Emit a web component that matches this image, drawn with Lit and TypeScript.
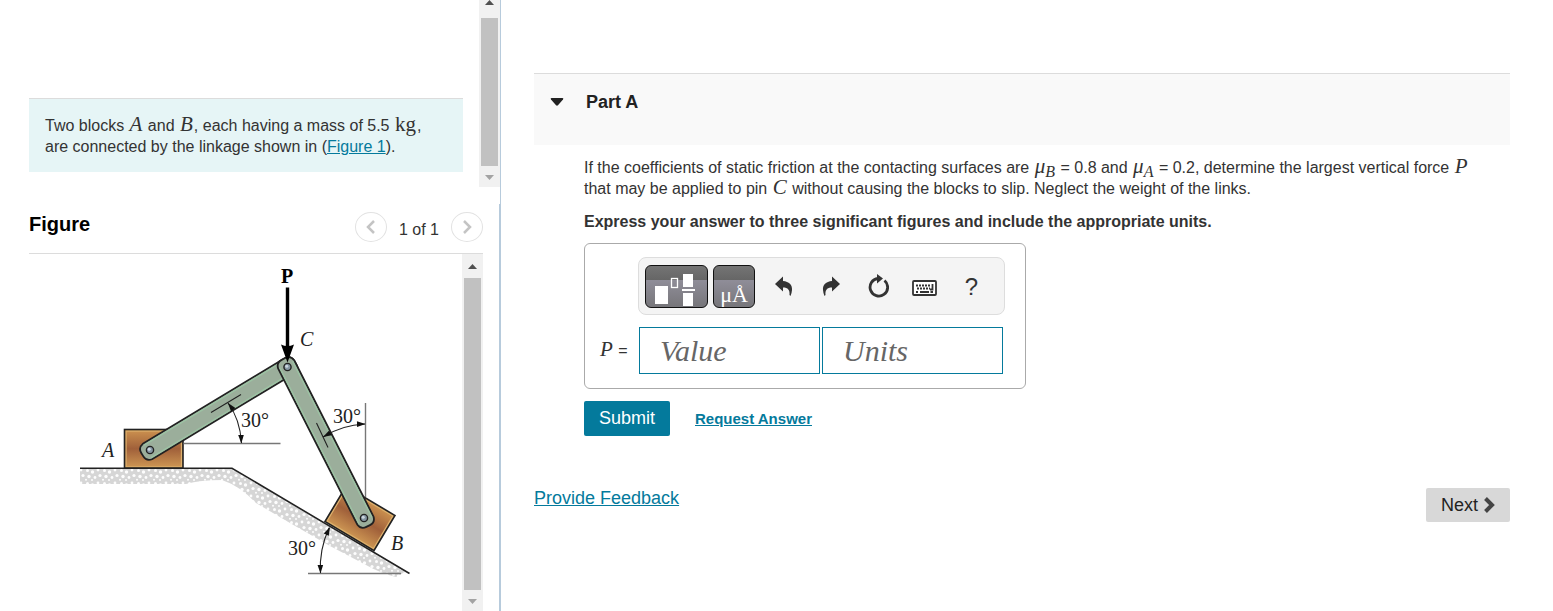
import { LitElement, html, css, svg } from "lit";
import { customElement, property } from "lit/decorators.js";

@customElement("scroll-rail")
class ScrollRail extends LitElement {
  @property({ type: Boolean, reflect: true }) clipped = false;

  static styles = css`
    :host {
      box-sizing: border-box;
      display: flex;
      flex-direction: column;
      align-items: center;
      width: 21px;
      background: #f1f1f1;
    }
    .arrow {
      display: flex;
      flex: none;
      align-items: center;
      justify-content: center;
      height: 24px;
    }
    :host([clipped]) .up {
      align-items: flex-start;
      height: 18px;
    }
    .down {
      height: 20px;
    }
    .thumb {
      flex: 1;
      width: 17px;
      margin-bottom: 1px;
      background: #c1c1c1;
    }
    svg {
      display: block;
    }
  `;

  render() {
    return html`
      <div class="arrow up"><svg width="9" height="5"><path d="M0 5L4.5 0L9 5z" fill="#505050" /></svg></div>
      <div class="thumb"></div>
      <div class="arrow down"><svg width="9" height="5"><path d="M0 0H9L4.5 5z" fill="#a3a3a3" /></svg></div>
    `;
  }
}

@customElement("linkage-figure")
class LinkageFigure extends LitElement {
  static styles = css`
    :host {
      display: block;
    }
    svg {
      display: block;
      width: 100%;
      max-width: 433px;
    }
    text {
      font-family: "Liberation Serif", serif;
      font-size: 20px;
      fill: #222;
    }
    .name {
      font-style: italic;
    }
    .force {
      font-weight: bold;
      fill: #000;
    }
    .edge {
      stroke: #222;
      stroke-width: 1.6;
      fill: none;
    }
    .guide {
      stroke: #777;
      stroke-width: 1.4;
      fill: none;
    }
    .arc {
      stroke: #222;
      stroke-width: 1.1;
      fill: none;
    }
  `;

  link(x: number, y: number, length: number, angle: number) {
    return svg`
      <g transform="translate(${x} ${y}) rotate(${angle})">
        <path d="M-3 -9H${length + 3}Q${length + 9} -8 ${length + 9} -2V2Q${length + 9} 8 ${length + 3} 9H-3Q-9 8 -9 2V-2Q-9 -8 -3 -9z"
          fill="#9bae9b" stroke="#222" stroke-width="1.8" />
        <path d="M-3 -7.2H${length + 3}M-3 7.2H${length + 3}" stroke="#9cc2a3" stroke-width="1.4" />
      </g>`;
  }

  pin(x: number, y: number) {
    return svg`
      <circle cx=${x} cy=${y} r="3.6" fill="#8596a3" stroke="#222" stroke-width="1.4" />
      <circle cx=${x - 0.8} cy=${y - 0.8} r="1.5" fill="#cbd6de" />`;
  }

  head(x: number, y: number, angle: number) {
    return svg`<path d="M0 0L-8.5 -2.8V2.8z" fill="#111" transform="translate(${x} ${y}) rotate(${angle})" />`;
  }

  render() {
    return html`
      <svg viewBox="29 254 433 340" role="img" aria-label="Two blocks joined by a linkage at pin C">
        <defs>
          <pattern id="gravel" width="17" height="13" patternUnits="userSpaceOnUse">
            <rect width="17" height="13" fill="#d6d6d6" />
            <g fill="#fdfdfd">
              <circle cx="2.5" cy="2.5" r="1.5" /><circle cx="7.5" cy="4" r="1.7" />
              <circle cx="13" cy="2" r="1.4" /><circle cx="4" cy="8.5" r="1.7" />
              <circle cx="10" cy="9.5" r="1.4" /><circle cx="15" cy="7.5" r="1.6" />
              <circle cx="7" cy="12" r="1" /><circle cx="1" cy="11.8" r="1" />
            </g>
          </pattern>
          <linearGradient id="wood" x1="0" y1="0" x2="0" y2="1">
            <stop offset="0" stop-color="#cd9350" />
            <stop offset="0.5" stop-color="#a0603a" />
            <stop offset="1" stop-color="#cf9854" />
          </linearGradient>
          <filter id="soft"><feGaussianBlur stdDeviation="0.7" /></filter>
        </defs>

        <path d="M80 469H232L405 572L396 577Q380 573 366 565L330 546L290 523L256 503Q240 486 222 480Q200 480 186 484H80z"
          fill="url(#gravel)" filter="url(#soft)" />
        <path class="edge" d="M80 468.200H232L409.500 573.500" />

        <rect x="124.500" y="429.500" width="58.500" height="38.500" fill="url(#wood)" />
        <rect x="126" y="431" width="55.500" height="36" fill="none" stroke="#dcb06c" stroke-width="1.300" />
        <rect class="edge" x="124.500" y="429.500" width="58.500" height="38.500" />

        <g transform="translate(325 521.500) rotate(30.800)">
          <rect y="-41" width="57" height="41" fill="url(#wood)" />
          <rect x="1.500" y="-39.500" width="54" height="38" fill="none" stroke="#dcb06c" stroke-width="1.300" />
          <rect class="edge" y="-41" width="57" height="41" />
        </g>

        <path class="guide" d="M183.500 443.500H280.500M308 573.500H401" />
        <path class="guide" d="M365.500 403V497" />

        ${this.link(150, 450, 160.6, -31.1)}
        ${this.link(287.5, 367, 169.3, 63.1)}
        ${this.pin(150, 450)} ${this.pin(287.5, 367)} ${this.pin(364, 518)}

        <path class="arc" d="M211 412.500L241 394.500M316.500 423L328 447.500" />
        <path class="arc" d="M228 403Q240 419 241.500 443" />
        ${this.head(228, 403, -128)} ${this.head(241.3, 443.5, 88)}
        <path class="arc" d="M323 437Q342 425 365 424" />
        ${this.head(323, 437, 151)} ${this.head(365.5, 424, -1)}
        <path class="arc" d="M329 528Q319 550 320.500 573" />
        ${this.head(330, 527, -64)} ${this.head(320.5, 573.5, 89)}

        <path d="M287.500 287.500V350" stroke="#000" stroke-width="3.400" />
        <path d="M281 344.500Q287.500 347.500 294 344.500L287.500 362.500z" fill="#000" />

        <text class="force" x="281" y="283">P</text>
        <text class="name" x="300" y="346">C</text>
        <text class="name" x="102" y="457">A</text>
        <text class="name" x="391" y="550">B</text>
        <text x="241" y="427">30°</text>
        <text x="333" y="423">30°</text>
        <text x="288" y="555">30°</text>
      </svg>
    `;
  }
}

@customElement("app-root")
class AppRoot extends LitElement {
  static styles = css`
    :host {
      display: grid;
      grid-template-columns: 501fr 1052fr;
      height: 100vh;
      overflow: hidden;
      background: #fff;
      color: #333;
      font-family: "Liberation Sans", Arial, sans-serif;
      font-size: 16px;
      line-height: 21px;
    }
    * {
      box-sizing: border-box;
    }
    h1,
    h2,
    p {
      margin: 0;
    }
    a {
      color: #047a9c;
    }
    button {
      padding: 0;
      border: 0;
      background: none;
      color: inherit;
      font: inherit;
      cursor: pointer;
    }
    svg {
      display: block;
    }
    .math {
      margin: 0 1px;
      font-family: "Liberation Serif", serif;
      font-size: 21px;
      line-height: 0;
    }
    .var {
      font-style: italic;
    }
    .math sub {
      font-size: 16px;
      line-height: 0;
      vertical-align: -4px;
    }

    .side {
      display: flex;
      flex-direction: column;
      min-width: 0;
      min-height: 0;
    }
    .problem {
      display: flex;
      flex: none;
      align-items: flex-end;
      justify-content: space-between;
      height: 204px;
      padding-left: 29px;
      border-right: 1px solid #b7cbdc;
    }
    .statement {
      flex: 1;
      margin: 0 16px 32px 0;
      padding: 16px 32px 15px 16px;
      border-top: 1px solid #dcdcdc;
      background: #e6f5f6;
    }
    .problem scroll-rail {
      height: 187px;
      margin-bottom: 17px;
    }
    .figure {
      display: flex;
      flex: 1;
      flex-direction: column;
      min-height: 0;
      padding: 8px 16px 0 29px;
      border-right: 2px solid #b7cbdc;
    }
    .figure-bar {
      display: flex;
      flex: none;
      justify-content: space-between;
      height: 42px;
      border-bottom: 1px solid #dcdcdc;
    }
    .figure-bar h2 {
      color: #000;
      font-size: 20px;
      line-height: 24px;
    }
    .pager {
      display: flex;
      gap: 12px;
      line-height: 35px;
    }
    .round {
      display: flex;
      align-items: center;
      justify-content: center;
      width: 32px;
      height: 30px;
      border: 1px solid #e2e2e2;
      border-radius: 50%;
    }
    .figure-view {
      display: flex;
      flex: 1;
      min-height: 0;
    }
    .figure-view linkage-figure {
      flex: 1;
      min-width: 0;
    }

    .main {
      min-width: 0;
      padding: 73px 43px 0 33px;
    }
    .part {
      display: flex;
      height: 72px;
      padding: 18px 16px;
      border-top: 1px solid #dcdcdc;
      background: #f9f9f9;
    }
    .part button {
      display: flex;
      align-items: center;
      gap: 22px;
      height: 21px;
    }
    .part h1 {
      color: #222;
      font-size: 18px;
      line-height: 21px;
    }
    .body {
      padding: 12px 20px 0 50px;
    }
    .hint {
      margin-top: 12px;
      font-weight: bold;
    }
    .answer {
      width: 442px;
      max-width: 100%;
      margin-top: 11px;
      padding: 13px 20px 14px 14px;
      border: 1px solid #aaa;
      border-radius: 6px;
    }
    .tools {
      display: flex;
      align-items: center;
      height: 58px;
      margin: 0 0 12px 39px;
      padding: 0 6px;
      border: 1px solid #ddd;
      border-radius: 8px;
      background: #f4f4f4;
    }
    .dark {
      height: 43px;
      margin-right: 5px;
      border: 1px solid #111;
      border-radius: 6px;
      background: linear-gradient(#747474, #666 34%, #8f8d98 35%, #77767a);
      color: #fff;
      overflow: hidden;
    }
    .template {
      width: 63px;
    }
    .symbols {
      width: 42px;
      padding-top: 16px;
      font-family: "Liberation Serif", serif;
      font-size: 22px;
      line-height: 26px;
    }
    .tool {
      display: flex;
      align-items: center;
      justify-content: center;
      width: 47px;
      height: 43px;
      font-size: 24px;
    }
    .fields {
      display: flex;
      align-items: center;
      gap: 2px;
      padding-right: 2px;
    }
    .fields label {
      width: 38px;
      white-space: nowrap;
    }
    .fields input {
      flex: 1;
      min-width: 0;
      height: 47px;
      padding: 0 20px;
      border: 1px solid #047a9c;
      border-radius: 0;
      background: #fff;
      color: #333;
      font: italic 30px "Liberation Serif", serif;
    }
    .fields input::placeholder {
      color: #666;
      opacity: 1;
    }
    .actions {
      display: flex;
      align-items: center;
      gap: 25px;
      margin-top: 12px;
    }
    .submit {
      width: 86px;
      height: 35px;
      border-radius: 2px;
      background: #047a9c;
      color: #fff;
      font-size: 18px;
    }
    .request {
      font-size: 15px;
      font-weight: bold;
    }
    .foot {
      display: flex;
      justify-content: space-between;
      margin-top: 52px;
      font-size: 18px;
    }
    .next {
      display: flex;
      align-items: center;
      justify-content: center;
      gap: 5px;
      width: 84px;
      height: 34px;
      border-radius: 2px;
      background: #d8d8d8;
      color: #222;
    }
  `;

  render() {
    return html`
      <aside class="side">
        <section class="problem">
          <p class="statement">
            Two blocks <span class="math var">A</span> and <span class="math var">B</span>, each having a mass of 5.5
            <span class="math">kg</span>, are connected by the linkage shown in (<a href="#figure">Figure 1</a>).
          </p>
          <scroll-rail clipped></scroll-rail>
        </section>
        <section class="figure" id="figure">
          <div class="figure-bar">
            <h2>Figure</h2>
            <div class="pager">
              <button class="round" aria-label="Previous figure">
                <svg width="9" height="14"><path d="M8 1L2 7L8 13" fill="none" stroke="#c4c4c4" stroke-width="2.500" /></svg>
              </button>
              <span>1 of 1</span>
              <button class="round" aria-label="Next figure">
                <svg width="9" height="14"><path d="M1 1L7 7L1 13" fill="none" stroke="#c4c4c4" stroke-width="2.500" /></svg>
              </button>
            </div>
          </div>
          <div class="figure-view">
            <linkage-figure></linkage-figure>
            <scroll-rail></scroll-rail>
          </div>
        </section>
      </aside>

      <main class="main">
        <header class="part">
          <button aria-expanded="true">
            <svg width="14" height="10"><path d="M1.500 0H12.500Q14 0 13 1.500L8 7.300Q7 8 6 7.300L1 1.500Q0 0 1.500 0z" fill="#222" /></svg>
            <h1>Part A</h1>
          </button>
        </header>
        <div class="body">
          <p>
            If the coefficients of static friction at the contacting surfaces are
            <span class="math var">μ<sub>B</sub></span> = 0.8 and <span class="math var">μ<sub>A</sub></span> = 0.2,
            determine the largest vertical force <span class="math var">P</span> that may be applied to pin
            <span class="math var">C</span> without causing the blocks to slip. Neglect the weight of the links.
          </p>
          <p class="hint">Express your answer to three significant figures and include the appropriate units.</p>
          <form class="answer" @submit=${(e: Event) => e.preventDefault()}>
            <div class="tools">
              <button type="button" class="dark template" aria-label="Templates">
                <svg width="61" height="41">
                  <path d="M9 20H22V38H9zM37 8H47V21H37zM37 27H47V40H37zM36 23H49V25H36z" fill="#fff" />
                  <rect x="25.500" y="12.500" width="6" height="9" fill="none" stroke="#fff" stroke-width="1.300" />
                </svg>
              </button>
              <button type="button" class="dark symbols" aria-label="Symbols">μÅ</button>
              <button type="button" class="tool" aria-label="Undo">
                <svg width="18" height="21"><path d="M0 8L8 0.500V5C14 5.500 17.500 9 17 14Q16.800 17 15.500 20L14.500 19C15 14 13 11.500 8 11.500V15.500z" fill="#333" /></svg>
              </button>
              <button type="button" class="tool" aria-label="Redo">
                <svg width="18" height="21"><path d="M18 8L10 0.500V5C4 5.500 0.500 9 1 14Q1.200 17 2.500 20L3.500 19C3 14 5 11.500 10 11.500V15.500z" fill="#333" /></svg>
              </button>
              <button type="button" class="tool" aria-label="Reset">
                <svg width="22" height="24">
                  <path d="M17.500 6.500A8.800 8.800 0 1 1 11 4.500" fill="none" stroke="#333" stroke-width="2.800" />
                  <path d="M10 0L16 4.500L10 9.500z" fill="#333" />
                </svg>
              </button>
              <button type="button" class="tool" aria-label="Keyboard">
                <svg width="25" height="20">
                  <rect x="1" y="5" width="23" height="14" rx="1" fill="#fff" stroke="#333" stroke-width="1.800" />
                  <path d="M4 9.500H18M5 12.500H18" stroke="#333" stroke-width="1.800" stroke-dasharray="2 1" />
                  <path d="M20.500 8V13.500H18M4 16H6M8 16H17M18.500 16H21" fill="none" stroke="#333" stroke-width="1.800" />
                </svg>
              </button>
              <button type="button" class="tool" aria-label="Help">?</button>
            </div>
            <div class="fields">
              <label for="value"><span class="math var">P</span> =</label>
              <input id="value" placeholder="Value" />
              <input id="units" placeholder="Units" aria-label="Units" />
            </div>
          </form>
          <div class="actions">
            <button class="submit">Submit</button>
            <a class="request" href="#answer">Request Answer</a>
          </div>
        </div>
        <footer class="foot">
          <a href="#feedback">Provide Feedback</a>
          <button class="next">
            Next
            <svg width="12" height="16"><path d="M2.500 1.500L9 8L2.500 14.500" fill="none" stroke="#444" stroke-width="4" /></svg>
          </button>
        </footer>
      </main>
    `;
  }
}
